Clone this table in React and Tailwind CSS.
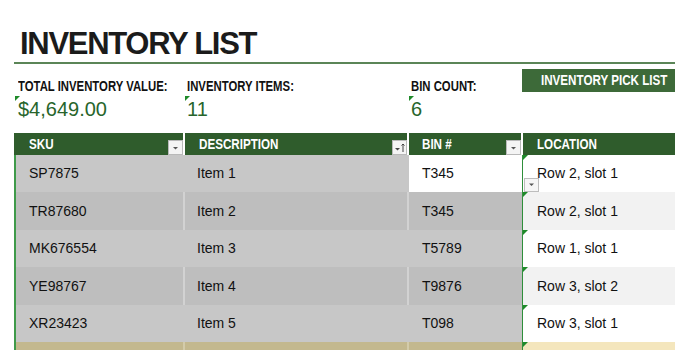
import React from 'react';

const rows = [
  { sku: 'SP7875', desc: 'Item 1', bin: 'T345', loc: 'Row 2, slot 1', h: 'h-[37px]', odd: true },
  { sku: 'TR87680', desc: 'Item 2', bin: 'T345', loc: 'Row 2, slot 1', h: 'h-[38px]', odd: false },
  { sku: 'MK676554', desc: 'Item 3', bin: 'T5789', loc: 'Row 1, slot 1', h: 'h-[37px]', odd: true },
  { sku: 'YE98767', desc: 'Item 4', bin: 'T9876', loc: 'Row 3, slot 2', h: 'h-[38px]', odd: false },
  { sku: 'XR23423', desc: 'Item 5', bin: 'T098', loc: 'Row 3, slot 1', h: 'h-[37px]', odd: true },
];

// little green error-check flag in the corner of a cell
const Flag = ({ className }) => (
  <svg width="5" height="5" viewBox="0 0 5 5" className={className}>
    <polygon points="0,0 5,0 0,5" fill="#1f8a2a" />
  </svg>
);

// condensed caption text (squeezed sans bold)
const Cond = ({ children, className = 'scale-x-[0.83]' }) => (
  <span className={`inline-block origin-left whitespace-nowrap ${className}`}>{children}</span>
);

const FilterButton = ({ sorted }) => (
  <div className="w-[15px] h-[15px] shrink-0 self-end bg-[#f4f4f4] border border-[#b9b9b9] flex items-center justify-center">
    <svg width="13" height="13" viewBox="0 0 13 13">
      {sorted ? (
        <>
          <polygon points="2,7 7,7 4.5,9.5" fill="#444" />
          <line x1="10" y1="3" x2="10" y2="11" stroke="#444" strokeWidth="1" />
          <polyline points="8.5,4.5 10,3 11.5,4.5" fill="none" stroke="#444" strokeWidth="1" />
        </>
      ) : (
        <polygon points="4,6 9,6 6.5,8.5" fill="#555" />
      )}
    </svg>
  </div>
);

const Stat = ({ label, value, width, pad }) => (
  <div className={`${width} shrink-0 pt-[10px]`}>
    <div className={`${pad} text-[14px] leading-[15px] font-bold text-[#111]`}>
      <Cond className="scale-x-[0.81]">{label}</Cond>
    </div>
    <div className="relative mt-[3px]">
      <Flag className="absolute left-[1px] top-[-1px]" />
      <div className={`${pad} text-[20px] leading-[24px] text-[#27652b]`}>{value}</div>
    </div>
  </div>
);

export default function App() {
  return (
    <div className="w-[675px] h-[350px] overflow-hidden bg-white" style={{ fontFamily: '"Liberation Sans", Arial, sans-serif' }}>
      <div className="pt-[27px] pl-[20px]">
        <h1 className="text-[31px] leading-[33px] font-bold tracking-[-1.3px] text-[#1b1b1b]">INVENTORY LIST</h1>
      </div>
      <div className="mt-[2px] ml-[14px] h-[2px] bg-[#5b8557]" />

      {/* summary figures */}
      <div className="mt-[5px] ml-[14px] flex items-start">
        <Stat label="TOTAL INVENTORY VALUE:" value="$4,649.00" width="w-[170px]" pad="pl-[4px]" />
        <Stat label="INVENTORY ITEMS:" value="11" width="w-[224px]" pad="pl-[3px]" />
        <Stat label="BIN COUNT:" value="6" width="w-[114px]" pad="pl-[3px]" />
        <div className="w-[153px] shrink-0 overflow-hidden h-[23px] bg-[#3d6a39] flex items-center pl-[19px] text-white text-[14px] font-bold">
          <Cond>INVENTORY PICK LIST</Cond>
        </div>
      </div>

      {/* table */}
      <div className="mt-[12px] ml-[14px] relative">
        <div className="flex h-[22px] text-white text-[14px] font-bold bg-[#2f5c2c]">
          <div className="w-[171px] shrink-0 flex items-center justify-between pl-[15px] border-r-2 border-white">
            <Cond>SKU</Cond>
            <FilterButton />
          </div>
          <div className="w-[224px] shrink-0 flex items-center justify-between pl-[14px] border-r-2 border-white">
            <Cond>DESCRIPTION</Cond>
            <FilterButton sorted />
          </div>
          <div className="w-[114px] shrink-0 flex items-center justify-between pl-[13px] border-r-2 border-white">
            <Cond>BIN #</Cond>
            <FilterButton />
          </div>
          <div className="flex-1 flex items-center pl-[14px]">
            <Cond>LOCATION</Cond>
          </div>
        </div>

        <div className="border-l-2 border-[#3f9a4a] text-[14px] text-[#111]">
          {rows.map((r, i) => {
            const bg = r.odd ? 'bg-[#c7c7c7]' : 'bg-[#bebebe]';
            const sep = r.odd ? 'border-[#c7c7c7]' : 'border-[#d2d2d2]';
            return (
              <div key={r.sku} className={`flex ${r.h}`}>
                <div className={`w-[169px] shrink-0 ${bg} border-r-2 ${sep} flex items-center pl-[13px]`}>{r.sku}</div>
                <div className={`w-[224px] shrink-0 ${bg} border-r-2 ${sep} flex items-center pl-[12px]`}>{r.desc}</div>
                <div className={`w-[114px] shrink-0 ${i === 0 ? 'bg-white' : bg} border-r border-[#2f8f3b] flex items-center pl-[13px]`}>{r.bin}</div>
                <div className={`relative flex-1 ${r.odd ? 'bg-white' : 'bg-[#f2f2f2]'} flex items-center pl-[14px]`}>
                  <Flag className="absolute left-0 top-0" />
                  {r.loc}
                </div>
              </div>
            );
          })}
          <div className="flex h-[37px]">
            <div className="w-[169px] shrink-0 bg-[#c3b88e] border-r-2 border-[#d3cbaa]" />
            <div className="w-[224px] shrink-0 bg-[#c3b88e] border-r-2 border-[#d3cbaa]" />
            <div className="w-[114px] shrink-0 bg-[#c3b88e] border-r border-[#2f8f3b]" />
            <div className="relative flex-1 bg-[#f4e6bd]">
              <Flag className="absolute left-0 top-0" />
            </div>
          </div>
        </div>

        {/* in-cell list dropdown on the selected row */}
        <div className="absolute left-[510px] top-[45px] w-[15px] h-[14px] bg-[#f6f6f6] border border-[#bdbdbd] flex items-center justify-center">
          <svg width="9" height="6" viewBox="0 0 9 6">
            <polygon points="2,1.5 7,1.5 4.5,4" fill="#555" />
          </svg>
        </div>
      </div>
    </div>
  );
}
